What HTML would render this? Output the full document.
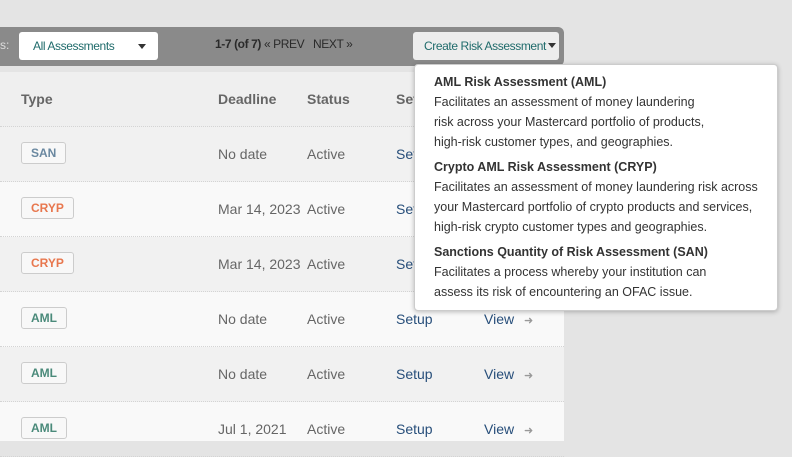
<!DOCTYPE html>
<html><head><style>
body{margin:0;width:792px;height:441px;overflow:hidden;background:#e4e4e4;font-family:"Liberation Sans",sans-serif;position:relative}
.tb{position:absolute;left:0;top:27px;width:564px;height:39px;background:#8a8a8a;border-radius:0 6px 6px 0}
.sel{position:absolute;left:19px;top:32px;width:139px;height:28px;background:#fff;border-radius:3px;font-size:12px;color:#1f6b6b;letter-spacing:-.4px}
.sel span{position:absolute;left:14px;top:7px}
.tri{position:absolute;width:0;height:0;border-left:4px solid transparent;border-right:4px solid transparent;border-top:5px solid #333}
.pg{position:absolute;left:215px;top:37px;font-size:12px;color:#2a2a2a;letter-spacing:-.4px}
.cr{position:absolute;left:413px;top:32px;width:146px;height:28px;background:#ededed;border-radius:3px;font-size:12px;color:#1f6b6b;letter-spacing:-.4px}
.tbl{position:absolute;left:0;top:72px;width:564px;height:369px;background:#f9f9f9}
.row{position:absolute;left:0;width:564px;height:54px;border-bottom:1px dotted #d4d4d4;font-size:14px;color:#666}
.row div{position:absolute;top:19px}
.hd{font-weight:bold;color:#666}
.b{left:21px;top:15px!important;height:20px;line-height:20px;padding:0 9px;border:1px solid #ccc;border-radius:3px;font-size:12px;font-weight:bold;background:#f8f8f8}
.lk{color:#274e7a}
.ar{color:#999;margin-left:6px;font-size:11px}
.dd{position:absolute;left:414px;top:64px;width:364px;height:247px;background:#fff;border:1px solid #ccc;border-radius:4px;box-shadow:0 1px 5px rgba(0,0,0,.25);font-size:12.5px;color:#333;line-height:20px;padding:7px 0 0 19px;box-sizing:border-box}
.dd b{display:block;margin-bottom:0}
.dd p{margin:0 0 5px}
</style></head><body>
<div class="tb"></div>
<div style="position:absolute;left:0;top:38px;font-size:12px;color:#ddd">s:</div>
<div class="sel"><span>All Assessments</span><div class="tri" style="left:119px;top:12px"></div></div>
<div class="pg"><b>1-7 (of 7)</b> « PREV &nbsp; NEXT »</div>
<div class="cr"><span style="position:absolute;left:11px;top:7px">Create Risk Assessment</span><div class="tri" style="left:135px;top:11px"></div></div>
<div class="tbl">
<div class="row hd" style="top:0;background:#efefef"><div style="left:21px">Type</div><div style="left:218px">Deadline</div><div style="left:307px">Status</div><div style="left:396px">Setup</div></div>
<div class="row" style="top:55px;background:#f1f1f1"><div class="b" style="color:#6a88a0">SAN</div><div style="left:218px">No date</div><div style="left:307px">Active</div><div class="lk" style="left:396px">Setup</div></div>
<div class="row" style="top:110px"><div class="b" style="color:#e8774e">CRYP</div><div style="left:218px">Mar 14, 2023</div><div style="left:307px">Active</div><div class="lk" style="left:396px">Setup</div></div>
<div class="row" style="top:165px;background:#f1f1f1"><div class="b" style="color:#e8774e">CRYP</div><div style="left:218px">Mar 14, 2023</div><div style="left:307px">Active</div><div class="lk" style="left:396px">Setup</div></div>
<div class="row" style="top:220px"><div class="b" style="color:#4a8a7a">AML</div><div style="left:218px">No date</div><div style="left:307px">Active</div><div class="lk" style="left:396px">Setup</div><div class="lk" style="left:484px">View <span class="ar">➜</span></div></div>
<div class="row" style="top:275px;background:#f1f1f1"><div class="b" style="color:#4a8a7a">AML</div><div style="left:218px">No date</div><div style="left:307px">Active</div><div class="lk" style="left:396px">Setup</div><div class="lk" style="left:484px">View <span class="ar">➜</span></div></div>
<div class="row" style="top:330px"><div class="b" style="color:#4a8a7a">AML</div><div style="left:218px">Jul 1, 2021</div><div style="left:307px">Active</div><div class="lk" style="left:396px">Setup</div><div class="lk" style="left:484px">View <span class="ar">➜</span></div></div>
</div>
<div class="dd">
<b>AML Risk Assessment (AML)</b><p>Facilitates an assessment of money laundering<br>risk across your Mastercard portfolio of products,<br>high-risk customer types, and geographies.</p>
<b>Crypto AML Risk Assessment (CRYP)</b><p>Facilitates an assessment of money laundering risk across<br>your Mastercard portfolio of crypto products and services,<br>high-risk crypto customer types and geographies.</p>
<b>Sanctions Quantity of Risk Assessment (SAN)</b><p>Facilitates a process whereby your institution can<br>assess its risk of encountering an OFAC issue.</p>
</div>
</body></html>
